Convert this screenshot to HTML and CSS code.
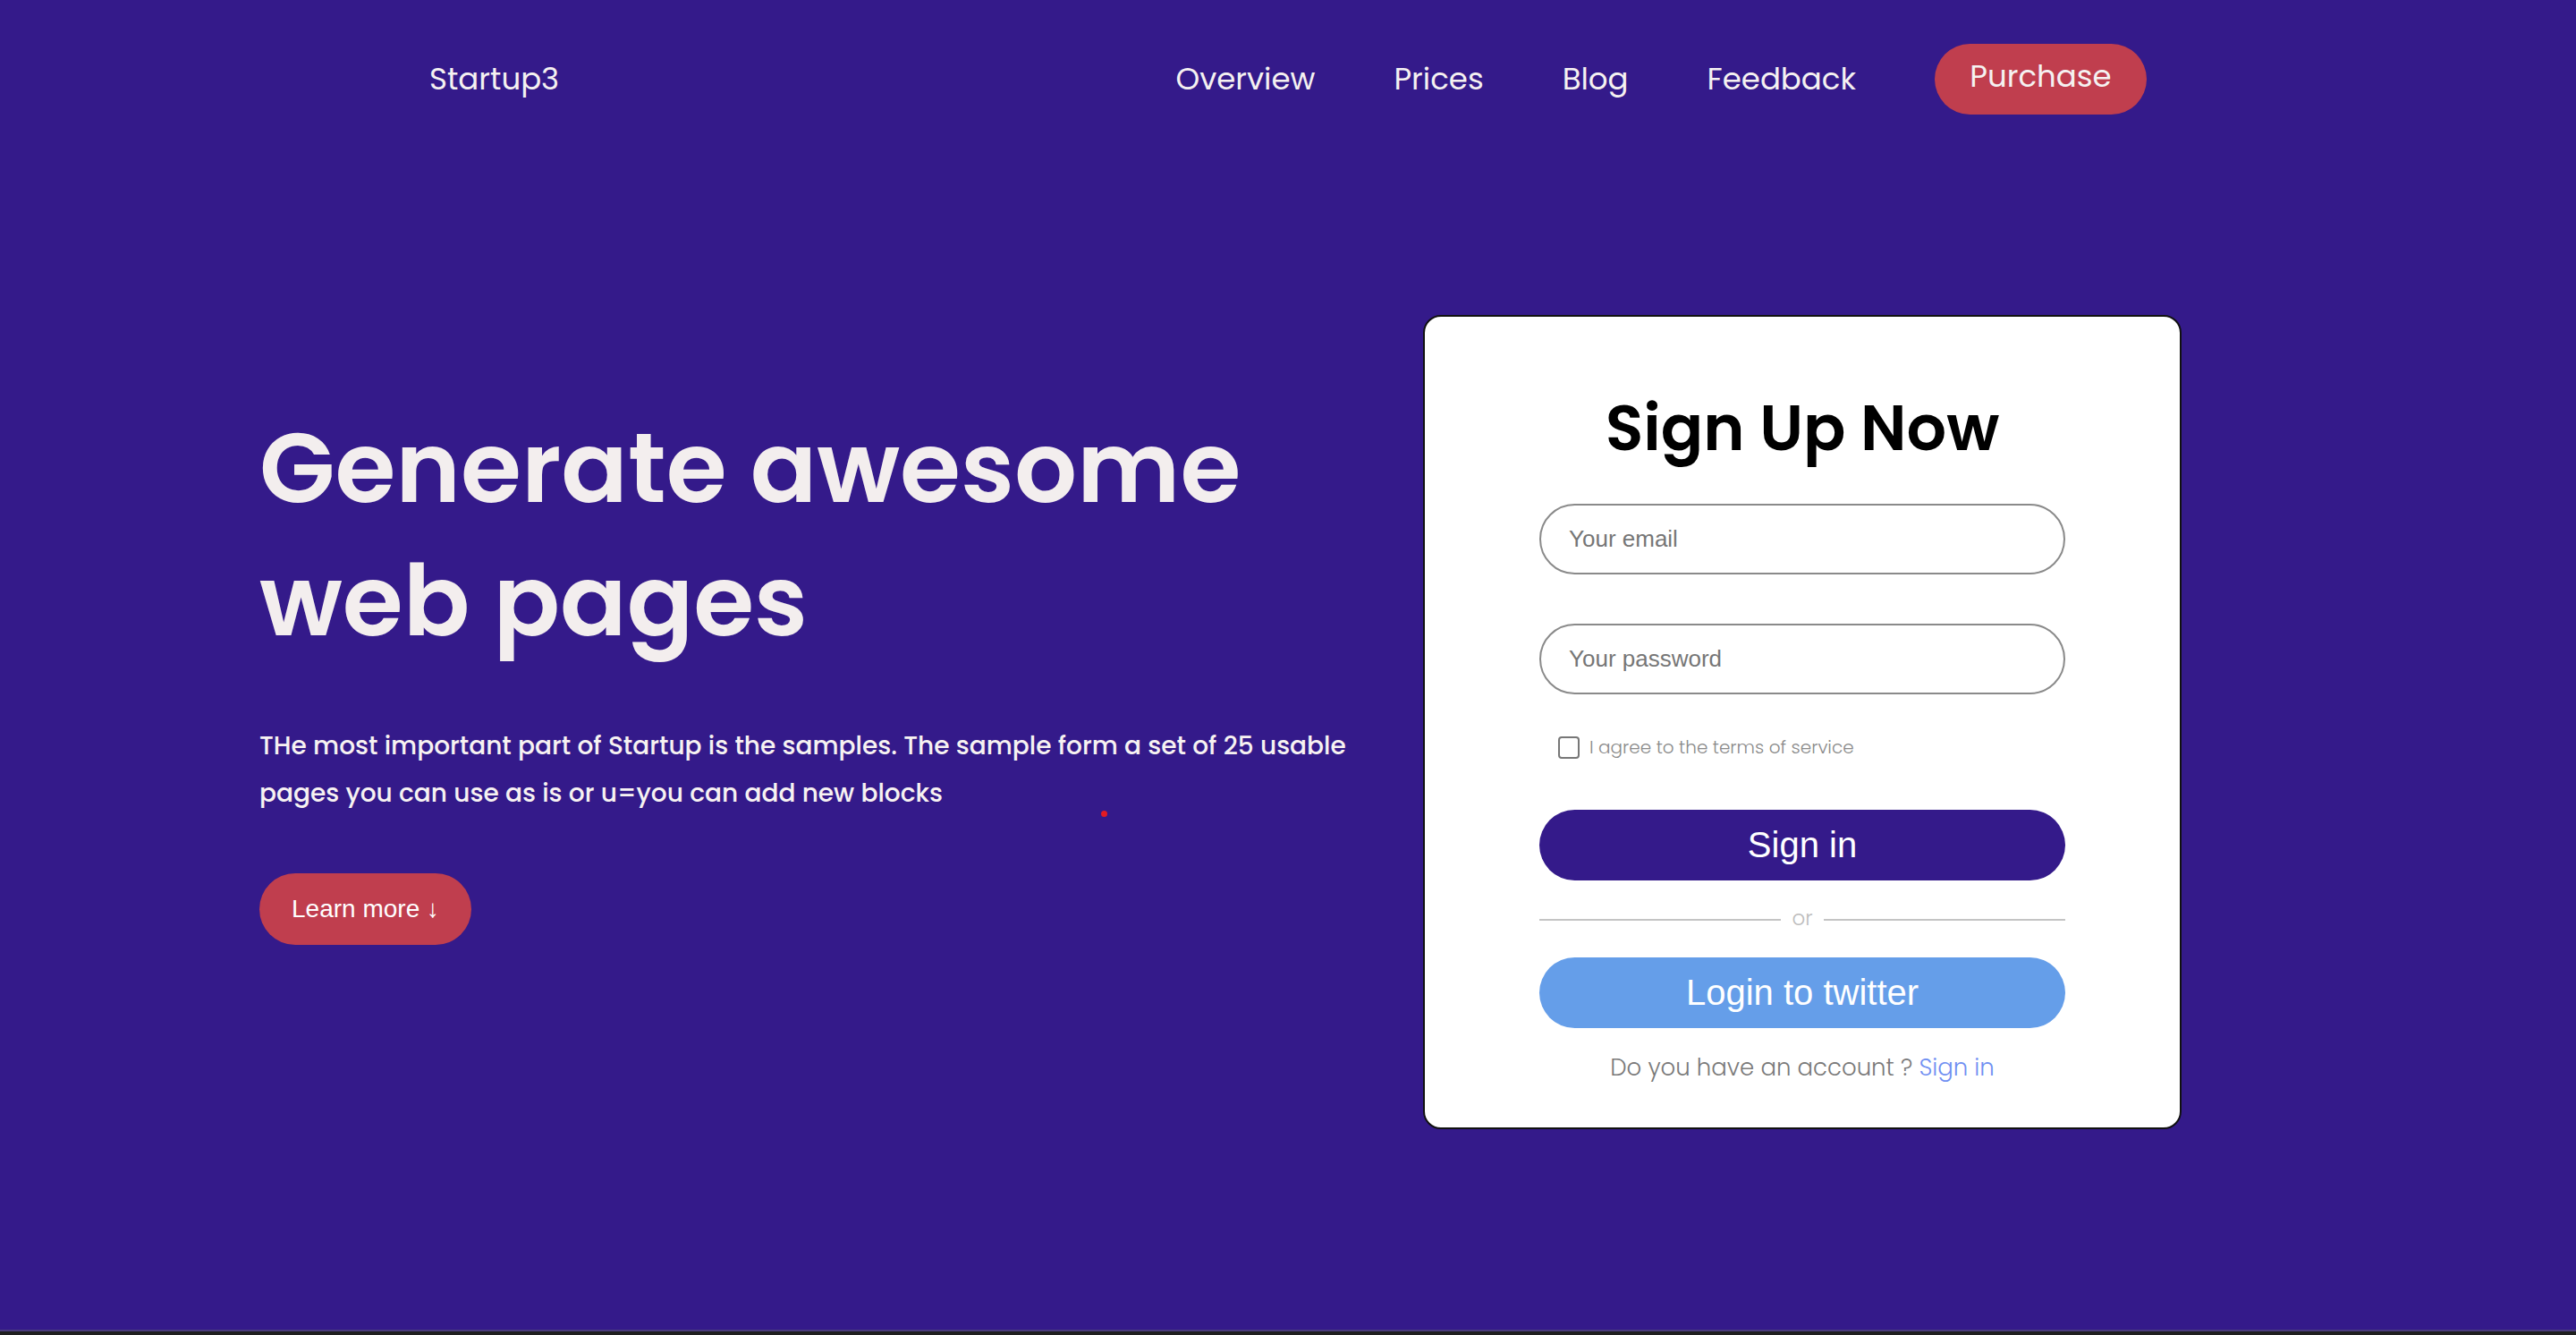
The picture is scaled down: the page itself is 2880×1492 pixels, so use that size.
FILE: index.html
```html
<!DOCTYPE html>
<html lang="en">
<head>
<meta charset="utf-8">
<title>Startup3</title>
<link rel="stylesheet" href="styles.css">
</head>
<body>
<div class="page">
  <header class="nav">
    <a class="brand" href="#">Startup3</a>
    <nav class="links">
      <a href="#">Overview</a>
      <a href="#">Prices</a>
      <a href="#">Blog</a>
      <a href="#">Feedback</a>
      <a class="btn-red btn-purchase" href="#">Purchase</a>
    </nav>
  </header>
  <main class="hero">
    <section class="hero-left">
      <h1 class="title">Generate awesome web pages</h1>
      <p class="lead">THe most important part of Startup is the samples. The sample form a set of 25 usable pages you can use as is or u=you can add new blocks</p>
      <a class="btn-red btn-learn" href="#">Learn more ↓</a>
    </section>
    <section class="card">
      <h2 class="card-title">Sign Up Now</h2>
      <form class="form">
        <input class="field" type="email" placeholder="Your email">
        <input class="field field-pass" type="password" placeholder="Your password">
        <label class="agree"><span class="box"></span><span>I agree to the terms of service</span></label>
        <button class="pill pill-primary" type="button">Sign in</button>
        <div class="divider"><span class="line"></span><span class="or">or</span><span class="line"></span></div>
        <button class="pill pill-twitter" type="button">Login to twitter</button>
        <p class="account">Do you have an account ? <a href="#">Sign in</a></p>
      </form>
    </section>
    <span class="dot"></span>
  </main>
</div>
</body>
</html>
```
FILE: styles.css
```css
html { background: #1f1f1f; }
body { margin: 0; font-family: "Poppins", "Inter", "Noto Sans", sans-serif; }
a { text-decoration: none; color: inherit; }

.page {
  background: #341a8a;
  height: 1486px;
  border-bottom: 2px solid #4a3b7c;
  position: relative;
  color: #f3eeee;
}

.nav {
  width: 1920px;
  margin: 0 auto;
  height: 176px;
  display: flex;
  align-items: center;
  justify-content: space-between;
}
.brand { font-size: 34px; color: #f5f1f1; }
.links { display: flex; align-items: center; gap: 88px; font-size: 34px; }
.links a { color: #f5f1f1; }

.btn-red {
  background: #c03e4e;
  border-radius: 40px;
  display: inline-flex;
  align-items: center;
  justify-content: center;
  color: #fff;
}
.btn-purchase { width: 237px; height: 79px; padding-bottom: 6px; box-sizing: border-box; }

.hero { display: flex; align-items: flex-start; padding-left: 290px; }
.hero-left { width: 1240px; margin-top: 272px; }
.title {
  margin: 0;
  font-size: 110px;
  line-height: 149px;
  font-weight: 600;
  color: #f3eeee;
}
.lead {
  margin: 61px 0 0;
  font-size: 28px;
  line-height: 53px;
  font-weight: 500;
  color: #f7f2f2;
  width: 1240px;
}
.btn-learn {
  margin-top: 63px;
  width: 237px;
  height: 80px;
  font-family: "Liberation Sans", Arial, sans-serif;
  font-size: 28px;
}

.card {
  margin-left: 61px;
  margin-top: 176px;
  width: 848px;
  box-sizing: border-box;
  background: #fff;
  border: 2px solid #111;
  border-radius: 20px;
  padding: 90px 0 49px;
  display: flex;
  flex-direction: column;
  align-items: center;
}
.card-title {
  margin: 0;
  font-size: 70px;
  line-height: 70px;
  font-weight: 600;
  color: #000;
}
.form { width: 588px; margin-top: 49px; display: flex; flex-direction: column; }
.field {
  height: 79px;
  box-sizing: border-box;
  border: 2px solid #8a8a8a;
  border-radius: 40px;
  padding: 0 31px;
  font-family: "Liberation Sans", Arial, sans-serif;
  font-size: 26px;
  outline: none;
  background: #fff;
}
.field::placeholder { color: #767676; }
.field-pass { margin-top: 55px; }
.agree {
  margin-top: 44px;
  height: 30px;
  display: flex;
  align-items: center;
  gap: 11px;
  padding-left: 21px;
  font-size: 20px;
  font-weight: 300;
  color: #8a8a8a;
}
.box {
  width: 24px;
  height: 25px;
  box-sizing: border-box;
  border: 2px solid #777;
  border-radius: 4px;
}
.pill {
  height: 79px;
  border: 0;
  border-radius: 40px;
  color: #fff;
  font-family: "Liberation Sans", Arial, sans-serif;
  font-size: 40px;
}
.pill-primary { margin-top: 55px; background: #341a8a; }
.pill-twitter { background: #659ee9; }
.divider {
  height: 30px;
  margin: 29px 0 27px;
  display: flex;
  align-items: center;
  gap: 12px;
}
.line { flex: 1; height: 2px; background: #c4c4c4; }
.or { font-size: 23px; font-weight: 300; color: #bdbdbd; line-height: 30px; padding-bottom: 4px; }
.account {
  margin: 26px 0 0;
  text-align: center;
  font-size: 26px;
  line-height: 36px;
  font-weight: 300;
  color: #7a7a7a;
}
.account a { color: #6f8ff2; }

.dot {
  position: absolute;
  left: 1231px;
  top: 906px;
  width: 7px;
  height: 7px;
  border-radius: 50%;
  background: #e31b23;
}
```
